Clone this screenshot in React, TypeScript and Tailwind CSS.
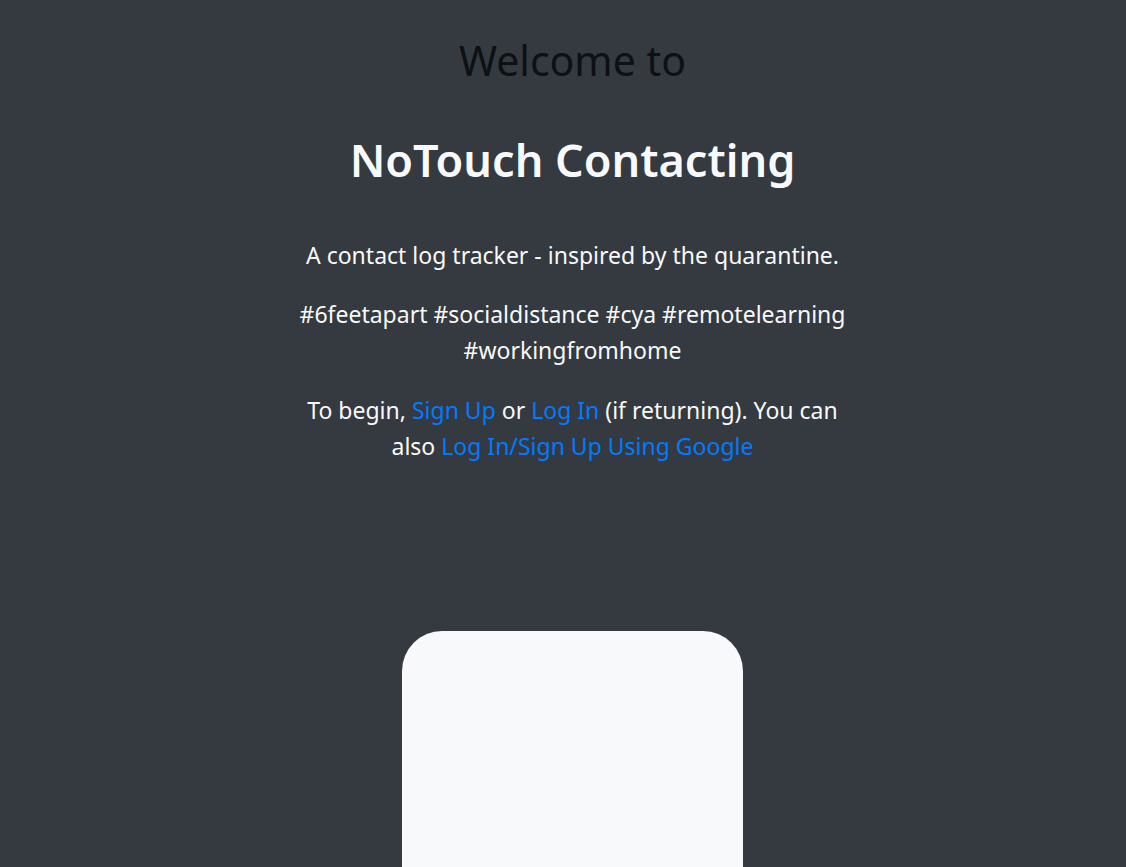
export default function App() {
  return (
    <div
      className="min-h-screen bg-[#343a40] text-[#f8f9fa] flex flex-col items-center overflow-hidden pl-[19px]"
      style={{ fontFamily: '"Noto Sans", "Open Sans", sans-serif' }}
    >
      <div className="w-[552px] flex flex-col items-center text-center">
        <h2 className="mt-[30px] text-[41px] leading-[60px] text-[#0d1014] font-normal">Welcome to</h2>
        <h1 className="mt-[40px] text-[45px] leading-[60px] font-semibold">NoTouch Contacting</h1>
        <p className="mt-[47px] text-[23px] leading-[36px]">A contact log tracker - inspired by the quarantine.</p>
        <p className="mt-[23px] text-[23px] leading-[36px]">
          #6feetapart #socialdistance #cya #remotelearning #workingfromhome
        </p>
        <p className="mt-[24px] text-[23px] leading-[36px]">
          To begin, <a className="text-[#007bff]" href="#">Sign Up</a> or{" "}
          <a className="text-[#007bff]" href="#">Log In</a> (if returning). You can also{" "}
          <a className="text-[#007bff]" href="#">Log In/Sign Up Using Google</a>
        </p>
      </div>
      <div className="mt-[167px] w-[341px] h-[300px] bg-[#f8f9fa] rounded-[40px] shrink-0" />
    </div>
  );
}
